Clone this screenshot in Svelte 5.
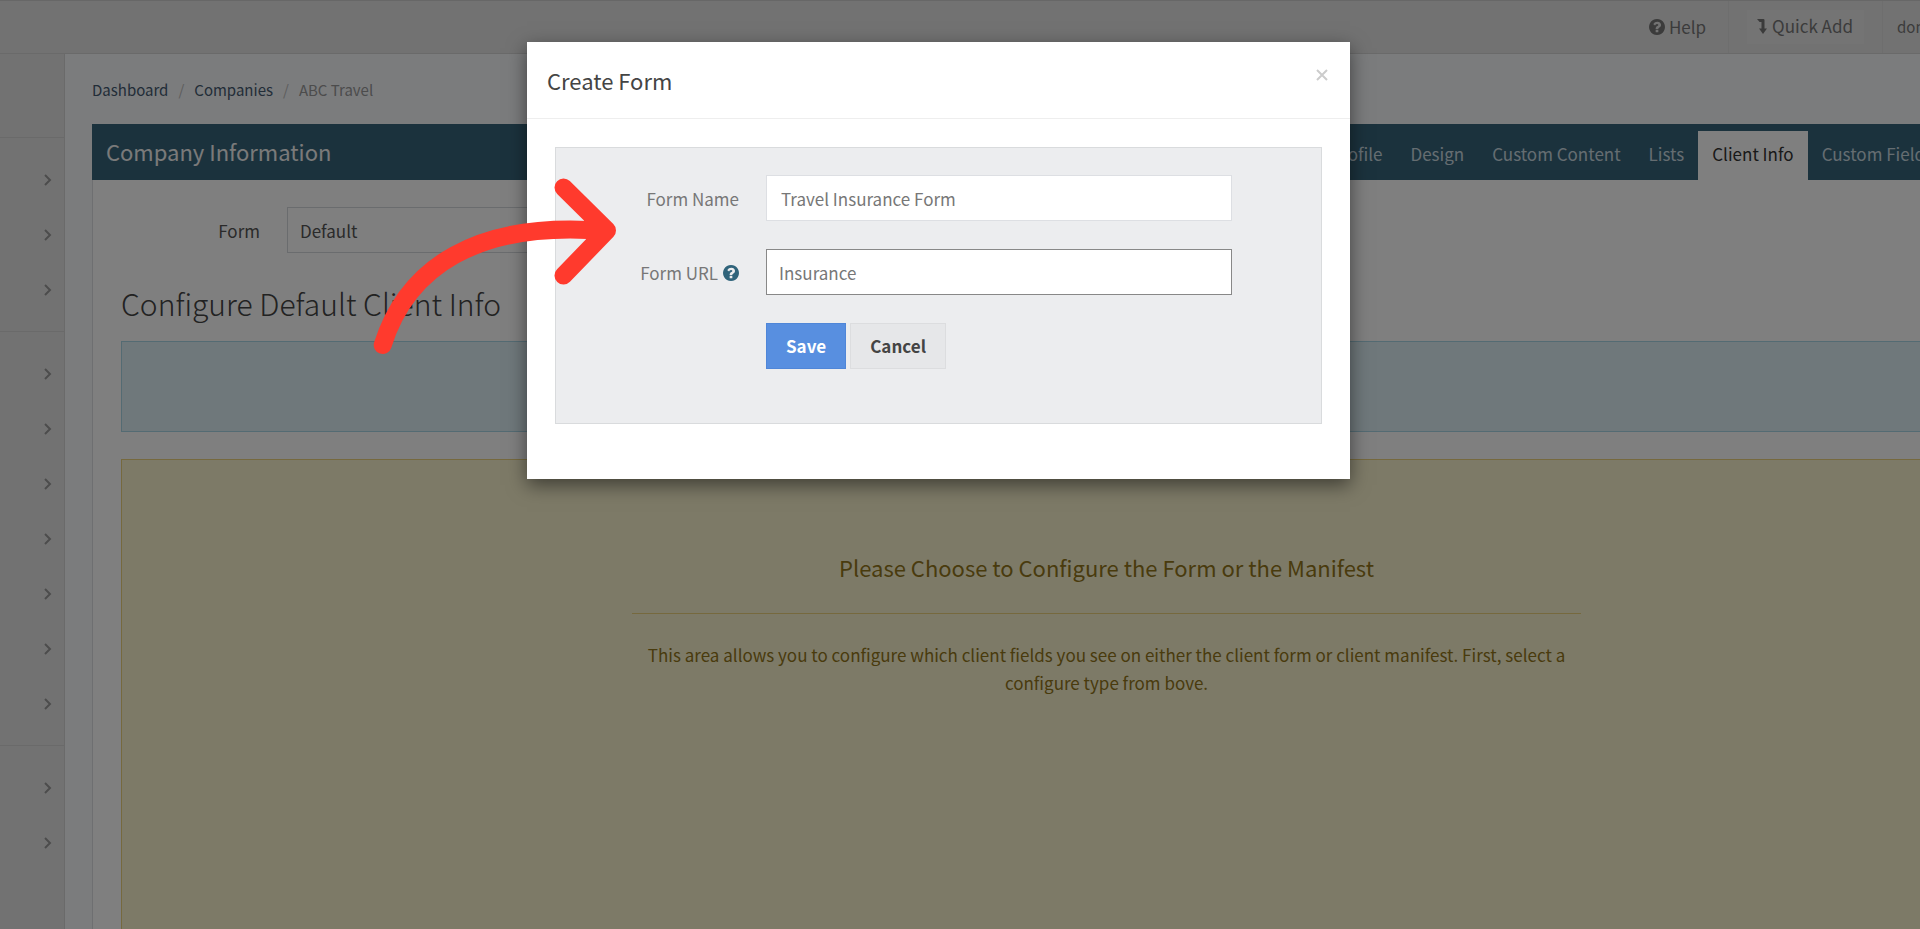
<script lang="ts">
  // Company settings page with the "Create Form" dialog open on top.
  // The shell is wider than the window: the menu labels run off the left edge.
  const menu = [
    { key: 'main', items: ['Dashboard', 'Bookings', 'Calendar'] },
    { key: 'manage', items: ['Companies', 'Clients', 'Trips', 'Payments', 'Reports', 'Marketing', 'Website'] },
    { key: 'system', items: ['Settings', 'Account'] },
  ];

  const tabs = ['Profile', 'Design', 'Custom Content', 'Lists', 'Client Info', 'Custom Fields'];
  const activeTab = 'Client Info';

  let formName = $state('Travel Insurance Form');
  let formUrl = $state('Insurance');
</script>

{#snippet helpIcon()}
  <svg class="help-icon" viewBox="128 128 1536 1536" aria-hidden="true">
    <path fill="currentColor" fill-rule="evenodd" d="M1024 1376v-192q0 -14 -9 -23t-23 -9h-192q-14 0 -23 9t-9 23v192q0 14 9 23t23 9h192q14 0 23 -9t9 -23zM1280 704q0 -88 -55.5 -163t-138.5 -116t-170 -41q-243 0 -371 213q-15 24 8 42l132 100q7 6 19 6q16 0 25 -12q53 -68 86 -92q34 -24 86 -24q48 0 85.5 26t37.5 59q0 38 -20 61t-68 45q-63 28 -115.5 86.5t-52.5 125.5v36q0 14 9 23t23 9h192q14 0 23 -9t9 -23q0 -19 21.5 -49.5t54.5 -49.5q32 -18 49 -28.5t46 -35t44.5 -48t28 -60.5t12.5 -81zM1664 896q0 209 -103 385.5t-279.5 279.5t-385.5 103t-385.5 -103t-279.5 -279.5t-103 -385.5t103 -385.5t279.5 -279.5t385.5 -103t385.5 103t279.5 279.5t103 385.5z" />
  </svg>
{/snippet}

<div class="viewport">
  <div class="shell">
    <header class="topbar">
      <a class="top-item" href="#help">{@render helpIcon()}Help</a>
      <div class="top-item split">
        <button class="quick" type="button">
          <svg width="10" height="15" viewBox="0 0 10 15" aria-hidden="true">
            <path fill="currentColor" d="M0 0h6.4q1.1 0 1.1 1.1v8.4H10L6 15 2 9.5h2.5V3H2.6z" />
          </svg>
          Quick Add
        </button>
      </div>
      <a class="top-item split user" href="#user">don</a>
    </header>

    <div class="body">
      <nav class="side" aria-label="Main menu">
        <div class="brand"></div>
        {#each menu as group (group.key)}
          <ul>
            {#each group.items as item (item)}
              <li>
                <a href="#{item.toLowerCase()}" aria-label={item}>
                  <svg width="8" height="12" viewBox="0 0 8 12" aria-hidden="true">
                    <path d="M1 1l5 5-5 5" fill="none" stroke="currentColor" stroke-width="2" />
                  </svg>
                </a>
              </li>
            {/each}
          </ul>
        {/each}
      </nav>

      <main>
        <nav class="crumbs" aria-label="Breadcrumb">
          <a href="#dashboard">Dashboard</a><i>/</i><a href="#companies">Companies</a><i>/</i><span>ABC Travel</span>
        </nav>

        <section class="panel">
          <div class="panel-head">
            <h1>Company Information</h1>
            <div class="tabs">
              {#each tabs as tab (tab)}
                <a href="#{tab.toLowerCase().replace(' ', '-')}" class:on={tab === activeTab}>{tab}</a>
              {/each}
            </div>
          </div>

          <div class="panel-body">
            <div class="picker">
              <label for="form-pick">Form</label>
              <select id="form-pick"><option>Default</option></select>
            </div>
            <h2>Configure Default Client Info</h2>
            <div class="info"></div>
            <div class="warning">
              <div class="message">
                <h3>Please Choose to Configure the Form or the Manifest</h3>
                <hr />
                <p>This area allows you to configure which client fields you see on either the client form or client manifest. First, select a configure type from bove.</p>
              </div>
            </div>
          </div>
        </section>
      </main>
    </div>

    <div class="backdrop">
      <div class="dialog" role="dialog" aria-modal="true" aria-labelledby="dialog-title">
        <div class="dialog-head">
          <h4 id="dialog-title">Create Form</h4>
          <button class="close" type="button" aria-label="Close">
            <svg width="12" height="12" viewBox="0 0 12 12" aria-hidden="true">
              <path d="M1 1l10 10M11 1L1 11" stroke="currentColor" stroke-width="2" />
            </svg>
          </button>
        </div>
        <form class="well" onsubmit={(e) => e.preventDefault()}>
          <label for="form-name">Form Name</label>
          <input id="form-name" type="text" bind:value={formName} />
          <label for="form-url">Form URL {@render helpIcon()}</label>
          <input id="form-url" class="focused" type="text" bind:value={formUrl} />
          <div class="actions">
            <button class="btn save" type="submit">Save</button>
            <button class="btn" type="button">Cancel</button>
          </div>
        </form>
      </div>
    </div>
  </div>

  <svg class="pointer" width="260" height="190" viewBox="365 170 260 190" aria-hidden="true">
    <path d="M382.7 345C407 268 476 220 606 231M563.5 187.5L607 230.5L563.5 275.5" />
  </svg>
</div>

<style>
  :global(body) { margin: 0; }

  .viewport {
    position: relative; height: 100vh; overflow: hidden;
    font: 17px/28px "Noto Sans CJK SC", "Source Sans Pro", sans-serif; color: #555;
  }
  .viewport * { box-sizing: border-box; }
  .shell {
    position: relative; display: flex; flex-direction: column;
    width: calc(100% + 501px); height: 100%; margin-left: -272px;
  }
  a { color: inherit; text-decoration: none; }
  h1, h2, h3, h4, p, ul { margin: 0; padding: 0; font-weight: 400; }
  button, input, select { font: inherit; }
  .help-icon { width: 16px; height: 16px; flex: none; }

  .topbar {
    display: flex; justify-content: flex-end; height: 54px; flex: none;
    background: #e5e5e5; border-top: 1px solid #cfcfcf; border-bottom: 1px solid #d4d4d4; color: #777;
  }
  .top-item { display: flex; align-items: center; gap: 4px; padding: 0 22px; }
  .split { padding: 0 18px; border-left: 1px solid #dcdcdc; }
  .quick {
    display: flex; align-items: center; gap: 5px; height: 34px; padding: 0 11px 2px 10px;
    border: 0; background: #e8e8e8; color: inherit;
  }
  .user { width: 267px; padding: 0 14px; font-size: 15px; }

  .body { display: flex; flex: 1; min-height: 0; }
  .side { width: 337px; flex: none; background: #e5e5e5; border-right: 1px solid #d4d4d4; }
  .brand { height: 84px; border-bottom: 1px solid #d4d4d4; }
  ul { padding: 14px 0; list-style: none; border-bottom: 1px solid #d4d4d4; }
  ul:last-child { border: 0; }
  li a { display: flex; align-items: center; justify-content: flex-end; height: 55px; padding-right: 12px; color: #999; }

  main { display: flex; flex-direction: column; flex: 1; min-width: 0; padding: 22px 28px 0 27px; background: #f6f8fb; }
  .crumbs { padding-bottom: 20px; font-size: 15px; color: #999; }
  .crumbs a { color: #455a70; }
  .crumbs i { margin: 0 10px; font-style: normal; color: #bbb; }

  .panel { display: flex; flex-direction: column; flex: 1; background: #fff; border: 1px solid #dcdfe2; border-width: 0 1px; }
  .panel-head {
    display: flex; justify-content: space-between; align-items: flex-end;
    height: 56px; margin: 0 -1px; padding: 0 174px 0 14px; background: #37657b;
  }
  h1 { padding-bottom: 15px; font-size: 22px; color: #f4f4f4; }
  .tabs { display: flex; }
  .tabs a { padding: 9px 14px 12px; color: #cbdbe2; }
  .tabs .on { background: #fff; color: #333; }

  .panel-body { display: flex; flex-direction: column; flex: 1; padding: 27px 28px 0; }
  .picker { display: flex; align-items: center; }
  .picker label { width: 139px; padding-top: 2px; margin-right: 27px; text-align: right; }
  select { width: 630px; height: 46px; padding: 2px 12px 0; border: 1px solid #d5d8dc; border-radius: 0; background: #fff; color: #555; appearance: none; }
  h2 { margin: 30px 0 18px; font-size: 30px; line-height: 40px; font-weight: 300; color: #444; }
  .info { height: 91px; margin-bottom: 27px; background: #dff0f6; border: 1px solid #a8d6e6; }
  .warning { flex: 1; padding-top: 89px; background: #faf5ce; border: 1px solid #ecd37c; border-bottom: 0; color: #93761a; text-align: center; }
  .message { width: calc(50% - 36px); margin: 0 auto; }
  h3 { font-size: 22px; line-height: 36px; }
  hr { margin: 28px 0 27px; border: 0; border-top: 1px solid #ecd37c; }

  .backdrop {
    position: absolute; inset: 0; display: flex; justify-content: center; align-items: flex-start;
    padding-top: 42px; background: rgba(0, 0, 0, .5);
  }
  .dialog { width: 823px; padding-bottom: 55px; background: #fff; box-shadow: 0 6px 18px rgba(0, 0, 0, .5); }
  .dialog-head { display: flex; justify-content: space-between; align-items: flex-start; padding: 24px 22px 24px 20px; border-bottom: 1px solid #eee; }
  h4 { font-size: 22px; color: #444; }
  .close { display: flex; padding: 3px 0; border: 0; background: none; color: #ccc; }

  .well {
    display: grid; grid-template-columns: 183px 466px; column-gap: 27px; row-gap: 28px; align-items: center;
    margin: 28px 28px 0; padding: 27px 0 54px; background: #ecedef; border: 1px solid #d9dbdd; color: #777;
  }
  .well label { display: flex; justify-content: flex-end; align-items: center; gap: 5px; padding-top: 2px; }
  .well label .help-icon { color: #30647b; }
  .well input { height: 46px; padding: 0 14px; border: 1px solid #dddfe3; background: #fff; color: #777; outline: 0; }
  .well .focused { padding: 0 12px; border-color: #888; }
  .actions { grid-column: 2; display: flex; gap: 4px; }
  .btn { height: 46px; padding: 0 19px; border: 1px solid #dcdddf; background: #e6e7e9; color: #444; font-weight: 700; }
  .save { background: #588fe0; border-color: #4f86d8; color: #fff; }

  /* the hint arrow lies over both the page and the dialog */
  .pointer { position: absolute; left: 365px; top: 170px; }
  .pointer path { fill: none; stroke: #ff3a2d; stroke-width: 18; stroke-linecap: round; stroke-linejoin: round; }
</style>
